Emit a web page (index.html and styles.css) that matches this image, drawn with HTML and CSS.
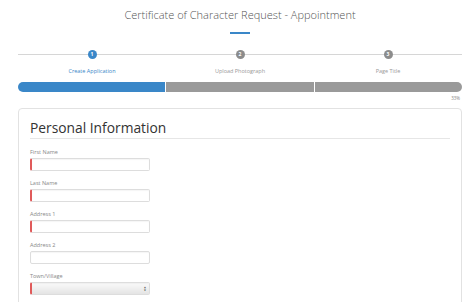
FILE: index.html
```html
<!DOCTYPE html>
<html>
<head>
<meta charset="utf-8">
<link rel="stylesheet" href="styles.css">
</head>
<body>
<div class="page">
  <h1 class="title">Certificate of Character Request - Appointment</h1>
  <div class="title-rule"></div>
  <div class="steps">
    <div class="step active">
      <div class="step-track"><span class="line"></span><span class="dot">1</span><span class="line"></span></div>
      <div class="step-label">Create Application</div>
    </div>
    <div class="step">
      <div class="step-track"><span class="line"></span><span class="dot">2</span><span class="line"></span></div>
      <div class="step-label">Upload Photograph</div>
    </div>
    <div class="step">
      <div class="step-track"><span class="line"></span><span class="dot">3</span><span class="line"></span></div>
      <div class="step-label">Page Title</div>
    </div>
  </div>
  <div class="progress">
    <div class="seg done"></div>
    <div class="seg"></div>
    <div class="seg"></div>
  </div>
  <div class="percent">33%</div>
  <div class="card">
    <h2 class="card-title">Personal Information</h2>
    <div class="field">
      <label class="field-label">First Name</label>
      <input class="input required" type="text">
    </div>
    <div class="field">
      <label class="field-label">Last Name</label>
      <input class="input required" type="text">
    </div>
    <div class="field">
      <label class="field-label">Address 1</label>
      <input class="input required" type="text">
    </div>
    <div class="field">
      <label class="field-label">Address 2</label>
      <input class="input" type="text">
    </div>
    <div class="field">
      <label class="field-label">Town/Village</label>
      <div class="select required"><span class="arrows"><span>&#9650;</span><span>&#9660;</span></span></div>
    </div>
  </div>
</div>
</body>
</html>
```
FILE: styles.css
```css
* { box-sizing: border-box; }
html, body { margin: 0; padding: 0; background: #fff; }
body { font-family: "Open Sans", "DejaVu Sans", sans-serif; color: #555; overflow: hidden; }
.page { padding: 0 6px 0 18px; }
.title {
  margin: 0;
  padding-top: 7px;
  font-size: 11px;
  line-height: 16px;
  font-weight: 300;
  color: #555;
  text-align: center;
}
.title-rule { width: 20px; height: 2px; background: #3a87c8; margin: 9px auto 0; }
.steps { display: flex; margin-top: 15px; }
.step { flex: 1; display: flex; flex-direction: column; align-items: center; }
.step-track { display: flex; align-items: center; width: 100%; height: 10px; }
.line { flex: 1; height: 1px; background: #d6d6d6; }
.dot {
  width: 9px; height: 9px; border-radius: 50%;
  background: #8c8c8c; color: #fff;
  font-size: 5px; font-weight: 700; line-height: 9px; text-align: center;
}
.active .dot { background: #3a87c8; }
.step-label { margin-top: 8px; font-size: 5.5px; line-height: 8px; color: #999; }
.active .step-label { color: #3a87c8; }
.progress {
  display: flex; gap: 1px; height: 10px; margin-top: 7px;
  border-radius: 5px; overflow: hidden; background: #fff;
}
.seg { flex: 1; background: #9a9a9a; }
.seg.done { background: #3a87c8; }
.percent { text-align: right; font-size: 4.5px; line-height: 6px; color: #888; padding-right: 2px; margin-top: 3px; }
.card {
  margin-top: 7px;
  border: 1px solid #e2e2e2;
  border-radius: 4px;
  padding: 0 11px 20px 11px;
}
.card-title {
  margin: 0;
  padding-top: 10px;
  padding-bottom: 1px;
  font-size: 13.8px;
  line-height: 18px;
  font-weight: 400;
  color: #333;
  border-bottom: 1px solid #e6e6e6;
}
.field { display: flex; flex-direction: column; align-items: flex-start; margin-top: 9px; }
.field + .field { margin-top: 8px; }
.field-label { font-size: 5.5px; line-height: 8px; color: #888; margin-bottom: 2px; }
.input, .select {
  width: 120px; height: 13px;
  border: 1px solid #ddd; border-radius: 2px;
  background: #fff; padding: 0; margin: 0;
  box-shadow: inset 0 1px 1px rgba(0,0,0,0.04);
  outline: none;
}
.required { border-left: 2px solid #e05a5a; }
.select {
  display: flex; justify-content: flex-end; align-items: center;
  background: linear-gradient(#fafafa, #e4e4e4);
  padding-right: 3px;
}
.arrows { display: flex; flex-direction: column; font-size: 2.5px; line-height: 3px; color: #555; }
```
